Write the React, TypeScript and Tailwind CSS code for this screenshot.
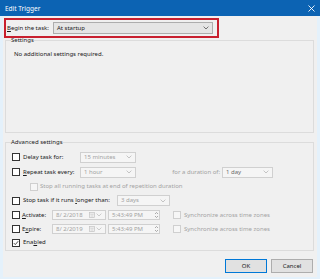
import React from "react"

const Chevron = ({ className }: { className: string }) => (
  <svg width="6" height="4" viewBox="0 0 6 4" className={className}>
    <path d="M0.6 0.6 L3 3 L5.4 0.6" fill="none" stroke="currentColor" strokeWidth="0.8" />
  </svg>
)

const Checkbox = ({ checked, disabled }: { checked?: boolean; disabled?: boolean }) => (
  <span
    className={
      disabled
        ? "w-[8px] h-[8px] shrink-0 border border-[#cfcfcf] bg-[#f6f6f6]"
        : "w-[8px] h-[8px] shrink-0 border border-[#333333] bg-white flex items-center justify-center"
    }
  >
    {checked && (
      <svg width="6" height="6" viewBox="0 0 6 6">
        <path d="M0.8 3.1 L2.3 4.6 L5.2 1.2" fill="none" stroke="#222" strokeWidth="0.8" />
      </svg>
    )}
  </span>
)

const Combo = ({ value, className, textClass }: { value: string; className: string; textClass?: string }) => (
  <div
    className={`${className} h-[11px] shrink-0 border border-[#d0d0d0] bg-[#f5f5f5] flex items-center justify-between pl-[3px] pr-[3px]`}
  >
    <span className={textClass ?? "text-[#a3a3a3]"}>{value}</span>
    <Chevron className="text-[#b8b8b8]" />
  </div>
)

const DateBox = ({ value }: { value: string }) => (
  <div className="w-[54px] h-[10px] shrink-0 border border-[#d0d0d0] bg-[#f5f5f5] flex items-center justify-between pl-[3px] pr-[3px] text-[#a3a3a3]">
    <span>{value}</span>
    <span className="flex items-center gap-[1px]">
      <svg width="6" height="6" viewBox="0 0 6 6">
        <rect x="0.5" y="0.5" width="5" height="5" fill="none" stroke="#c4c4c4" strokeWidth="0.7" />
        <path d="M0.5 2 H5.5 M2.2 2 V5.5 M3.8 2 V5.5" stroke="#c4c4c4" strokeWidth="0.5" />
      </svg>
      <Chevron className="text-[#c0c0c0]" />
    </span>
  </div>
)

const TimeBox = ({ value }: { value: string }) => (
  <div className="w-[52px] h-[10px] shrink-0 border border-[#d0d0d0] bg-[#f5f5f5] flex items-center justify-between pl-[3px] text-[#a3a3a3]">
    <span>{value}</span>
    <svg width="5" height="8" viewBox="0 0 5 8">
      <path d="M1 3 L2.5 1.5 L4 3 M1 5 L2.5 6.5 L4 5" fill="none" stroke="#8a8a8a" strokeWidth="0.7" />
    </svg>
  </div>
)

export default function App() {
  return (
    <div className="w-[320px] h-[279px] flex flex-col bg-[#f0f0f0] font-['Noto_Sans',sans-serif] text-[6px] leading-[9px] text-[#1a1a1a] whitespace-nowrap overflow-hidden">
      <div className="h-[16px] shrink-0 bg-[#0c63b3] flex items-center justify-between pl-[5px] pr-[5px] text-white text-[6.5px]">
        <span>Edit Trigger</span>
        <svg width="7" height="7" viewBox="0 0 7 7">
          <path d="M0.5 0.5 L6.5 6.5 M6.5 0.5 L0.5 6.5" stroke="white" strokeWidth="0.9" />
        </svg>
      </div>

      <div className="flex-1 flex flex-col border-x-[3px] border-b-[2px] border-[#e4f1fb]">
        {/* begin the task, boxed in red */}
        <div className="relative z-10 mt-[2px] ml-[1px] w-[215px] h-[20px] border-2 border-[#c8202f] flex items-center pl-[1px]">
          <span className="w-[46px]">
            <u>B</u>egin the task:
          </span>
          <div className="w-[160px] h-[12px] border border-[#adadad] bg-[#e5e5e5] flex items-center justify-between pl-[3px] pr-[3px]">
            <span>At startup</span>
            <Chevron className="text-[#555555]" />
          </div>
        </div>

        <fieldset className="mt-[-2px] ml-[2px] w-[309px] h-[97px] border border-[#dcdcdc] pl-[5px]">
          <legend className="leading-[9px]">Settings</legend>
          <div className="mt-[5px] ml-[3px]">No additional settings required.</div>
        </fieldset>

        <fieldset className="mt-[5px] ml-[2px] w-[309px] h-[113px] border border-[#dcdcdc] pl-[5px]">
          <legend className="leading-[9px]">Advanced settings</legend>
          <div className="mt-[3px] pl-[1px] flex flex-col">
            <div className="h-[14px] flex items-center">
              <Checkbox />
              <span className="ml-[3px] w-[57px]">Delay task for:</span>
              <Combo value="15 minutes" className="w-[56px]" />
            </div>
            <div className="h-[16px] flex items-center">
              <Checkbox />
              <span className="ml-[3px] w-[57px]">
                <u>R</u>epeat task every:
              </span>
              <Combo value="1 hour" className="w-[56px]" />
              <span className="w-[86px] text-right pr-[2px] text-[#a3a3a3]">for a duration of:</span>
              <Combo value="1 day" className="w-[51px]" textClass="text-[#6a6a6a]" />
            </div>
            <div className="h-[13px] flex items-center pl-[18px]">
              <Checkbox disabled />
              <span className="ml-[2px] text-[#a3a3a3]">Stop all running tasks at end of repetition duration</span>
            </div>
            <div className="h-[15px] flex items-center">
              <Checkbox />
              <span className="ml-[3px] w-[94px]">
                Stop task if it runs <u>l</u>onger than:
              </span>
              <Combo value="3 days" className="w-[53px]" />
            </div>
            <div className="h-[14px] flex items-center">
              <Checkbox />
              <span className="ml-[2px] w-[30px]">
                <u>A</u>ctivate:
              </span>
              <DateBox value="8/ 2/2018" />
              <div className="ml-[2px]">
                <TimeBox value="5:43:49 PM" />
              </div>
              <div className="ml-[13px] flex items-center">
                <Checkbox disabled />
                <span className="ml-[3px] text-[#a3a3a3]">Synchronize across time zones</span>
              </div>
            </div>
            <div className="h-[14px] flex items-center">
              <Checkbox />
              <span className="ml-[2px] w-[30px]">
                E<u>x</u>pire:
              </span>
              <DateBox value="8/ 2/2019" />
              <div className="ml-[2px]">
                <TimeBox value="5:43:49 PM" />
              </div>
              <div className="ml-[13px] flex items-center">
                <Checkbox disabled />
                <span className="ml-[3px] text-[#a3a3a3]">Synchronize across time zones</span>
              </div>
            </div>
            <div className="h-[13px] flex items-center">
              <Checkbox checked />
              <span className="ml-[3px]">
                Ena<u>b</u>led
              </span>
            </div>
          </div>
        </fieldset>

        <div className="mt-[8px] flex justify-end gap-[4px] pr-[4px]">
          <button className="w-[42px] h-[14px] border border-[#0078d7] bg-[#e1e1e1] flex items-center justify-center">
            OK
          </button>
          <button className="w-[42px] h-[14px] border border-[#adadad] bg-[#e1e1e1] flex items-center justify-center">
            Cancel
          </button>
        </div>
      </div>
    </div>
  )
}
